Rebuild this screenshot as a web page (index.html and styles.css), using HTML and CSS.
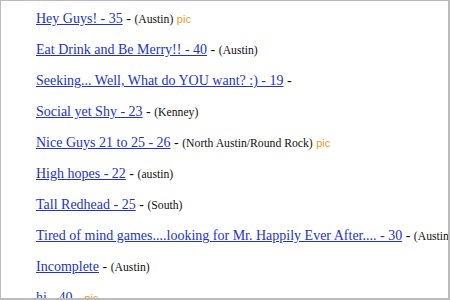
FILE: index.html
```html
<!DOCTYPE html>
<html lang="en">
  <head>
    <meta charset="UTF-8" />
    <title>Listings</title>
    <link rel="stylesheet" href="styles.css">
  </head>
  <body>
    <div class="frame">
      <p class="row"><a href="#">Hey Guys! - 35</a> - <span class="loc">(Austin)</span> <span class="pic">pic</span></p>
      <p class="row"><a href="#">Eat Drink and Be Merry!! - 40</a> - <span class="loc">(Austin)</span></p>
      <p class="row"><a href="#">Seeking... Well, What do YOU want? :) - 19</a> -</p>
      <p class="row"><a href="#">Social yet Shy - 23</a> - <span class="loc">(Kenney)</span></p>
      <p class="row"><a href="#">Nice Guys 21 to 25 - 26</a> - <span class="loc">(North Austin/Round Rock)</span> <span class="pic">pic</span></p>
      <p class="row"><a href="#">High hopes - 22</a> - <span class="loc">(austin)</span></p>
      <p class="row"><a href="#">Tall Redhead - 25</a> - <span class="loc">(South)</span></p>
      <p class="row"><a href="#">Tired of mind games....looking for Mr. Happily Ever After.... - 30</a> - <span class="loc">(Austin)</span></p>
      <p class="row"><a href="#">Incomplete</a> - <span class="loc">(Austin)</span></p>
      <p class="row"><a href="#">hi - 40</a> - <span class="pic">pic</span></p>
    </div>
  </body>
</html>
```

FILE: styles.css
```css
body {
  margin: 0;
  background: #fff;
}

.frame {
  box-sizing: border-box;
  height: 300px;
  padding: 9px 0 0 35px;
  border: 1px solid #bbb;
  border-right-width: 2px;
  border-bottom-width: 2px;
  overflow: hidden;
  font-family: "Liberation Serif", serif;
  font-size: 14px;
  color: #111;
}

.row {
  margin: 0 0 14px;
  line-height: 17px;
  white-space: nowrap;
}

.row a {
  color: #2233cc;
}

.loc {
  font-size: 11.7px;
  line-height: 1;
}

.pic {
  font-family: "Liberation Sans", Arial, sans-serif;
  font-size: 11px;
  line-height: 1;
  color: #e89a2c;
}
```
